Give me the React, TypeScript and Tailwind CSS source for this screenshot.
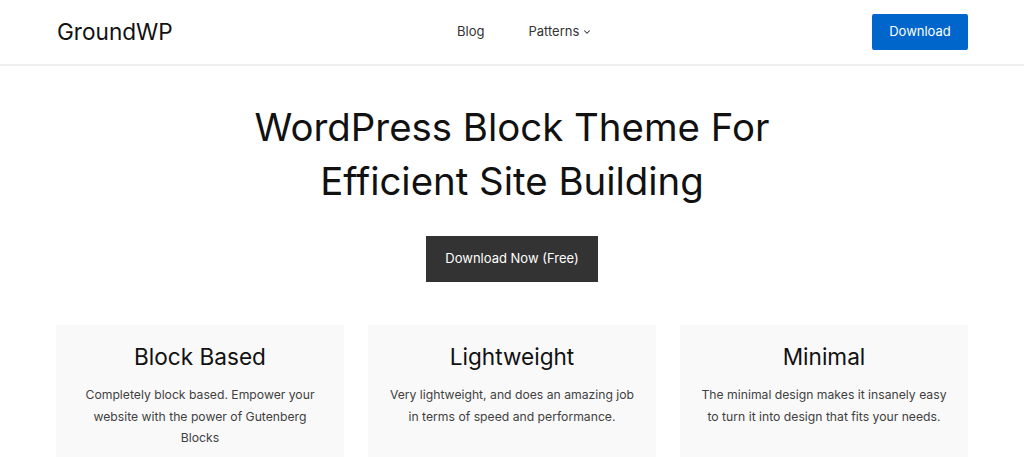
import * as React from 'react';
import { ChevronDown } from 'lucide-react';

const features = [
  {
    title: 'Block Based',
    text: 'Completely block based. Empower your website with the power of Gutenberg Blocks',
  },
  {
    title: 'Lightweight',
    text: 'Very lightweight, and does an amazing job in terms of speed and performance.',
  },
  {
    title: 'Minimal',
    text: 'The minimal design makes it insanely easy to turn it into design that fits your needs.',
  },
];

export default function App() {
  return (
    <div className="min-h-[457px] bg-white font-['Inter',sans-serif] text-[#111]">
      <header className="border-b-2 border-[#eeeeee]">
        <div className="mx-auto flex h-[64px] max-w-[912px] items-center">
          <a className="w-[200px] pl-px text-[22.6px] text-[#111]">GroundWP</a>
          <nav className="ml-[201px] flex items-center gap-[44px] text-[13px] text-[#333]">
            <a>Blog</a>
            <a className="flex items-center gap-[3px]">
              Patterns
              <ChevronDown className="h-[10px] w-[10px]" strokeWidth={2.5} />
            </a>
          </nav>
          <button
            type="button"
            className="ml-auto flex h-[36px] w-[96px] items-center justify-center rounded-[2px] bg-[#0066cc] text-[13px] text-white"
          >
            Download
          </button>
        </div>
      </header>

      <main className="mx-auto max-w-[912px]">
        <section className="flex flex-col items-center pt-[34px]">
          <h1 className="text-center text-[38.4px] leading-[54px] font-normal text-[#111]">
            WordPress Block Theme For
            <br />
            Efficient Site Building
          </h1>
          <button
            type="button"
            className="mt-[28px] h-[46px] w-[172px] bg-[#333333] text-[13px] text-white"
          >
            Download Now (Free)
          </button>
        </section>

        <section className="mt-[43px] grid grid-cols-3 gap-[24px]">
          {features.map((f) => (
            <div key={f.title} className="h-[140px] bg-[#f9f9f9] px-[20px] pt-[16px] text-center">
              <h2 className="text-[22.6px] leading-[32px] font-normal text-[#111]">{f.title}</h2>
              <p className="mt-[11px] text-[12.2px] leading-[21.5px] text-[#3f3f3f]">{f.text}</p>
            </div>
          ))}
        </section>
      </main>
    </div>
  );
}
